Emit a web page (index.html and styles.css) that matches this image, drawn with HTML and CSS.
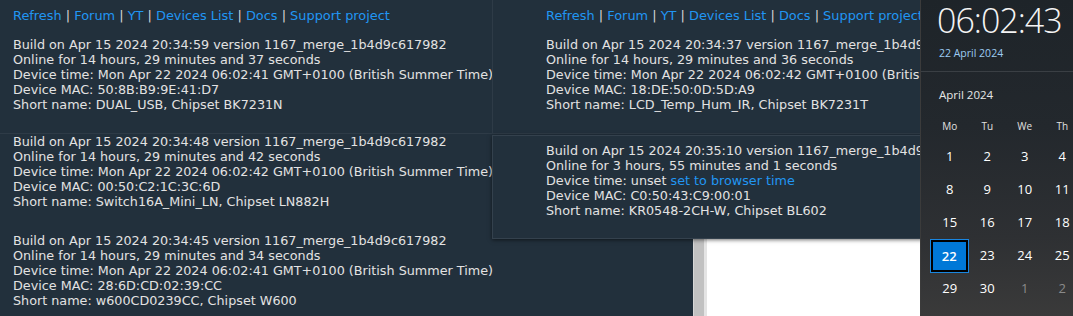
FILE: index.html
```html
<!DOCTYPE html>
<html>
<head>
<meta charset="utf-8">
<title>OpenBeken devices</title>
<link rel="stylesheet" href="styles.css">
</head>
<body>
<div class="desk">

  <section class="win win-c">
    <div class="info">
      <div>Build on Apr 15 2024 20:34:45 version 1167_merge_1b4d9c617982</div>
      <div>Online for 14 hours, 29 minutes and 34 seconds</div>
      <div>Device time: Mon Apr 22 2024 06:02:41 GMT+0100 (British Summer Time)</div>
      <div>Device MAC: 28:6D:CD:02:39:CC</div>
      <div>Short name: w600CD0239CC, Chipset W600</div>
    </div>
  </section>

  <div class="blank">
    <div class="scrollbar"></div>
  </div>

  <section class="win win-b">
    <div class="info">
      <div>Build on Apr 15 2024 20:34:48 version 1167_merge_1b4d9c617982</div>
      <div>Online for 14 hours, 29 minutes and 42 seconds</div>
      <div>Device time: Mon Apr 22 2024 06:02:42 GMT+0100 (British Summer Time)</div>
      <div>Device MAC: 00:50:C2:1C:3C:6D</div>
      <div>Short name: Switch16A_Mini_LN, Chipset LN882H</div>
    </div>
  </section>

  <section class="win win-a">
    <nav class="links"><a href="#">Refresh</a> | <a href="#">Forum</a> | <a href="#">YT</a> | <a href="#">Devices List</a> | <a href="#">Docs</a> | <a href="#">Support project</a></nav>
    <div class="info">
      <div>Build on Apr 15 2024 20:34:59 version 1167_merge_1b4d9c617982</div>
      <div>Online for 14 hours, 29 minutes and 37 seconds</div>
      <div>Device time: Mon Apr 22 2024 06:02:41 GMT+0100 (British Summer Time)</div>
      <div>Device MAC: 50:8B:B9:9E:41:D7</div>
      <div>Short name: DUAL_USB, Chipset BK7231N</div>
    </div>
  </section>

  <section class="win win-d">
    <nav class="links"><a href="#">Refresh</a> | <a href="#">Forum</a> | <a href="#">YT</a> | <a href="#">Devices List</a> | <a href="#">Docs</a> | <a href="#">Support project</a></nav>
    <div class="info">
      <div>Build on Apr 15 2024 20:34:37 version 1167_merge_1b4d9c617982</div>
      <div>Online for 14 hours, 29 minutes and 36 seconds</div>
      <div>Device time: Mon Apr 22 2024 06:02:42 GMT+0100 (British Summer Time)</div>
      <div>Device MAC: 18:DE:50:0D:5D:A9</div>
      <div>Short name: LCD_Temp_Hum_IR, Chipset BK7231T</div>
    </div>
  </section>

  <section class="win win-e">
    <div class="info">
      <div>Build on Apr 15 2024 20:35:10 version 1167_merge_1b4d9c617982</div>
      <div>Online for 3 hours, 55 minutes and 1 seconds</div>
      <div>Device time: unset <a href="#">set to browser time</a></div>
      <div>Device MAC: C0:50:43:C9:00:01</div>
      <div>Short name: KR0548-2CH-W, Chipset BL602</div>
    </div>
  </section>

  <aside class="cal">
    <div class="clock">06:02:43</div>
    <div class="today">22 April 2024</div>
    <div class="cal-body">
      <div class="month">April 2024</div>
      <div class="wk">
        <span>Mo</span><span>Tu</span><span>We</span><span>Th</span><span>Fr</span><span>Sa</span><span>Su</span>
      </div>
      <div class="days">
        <span>1</span><span>2</span><span>3</span><span>4</span><span>5</span><span>6</span><span>7</span>
        <span>8</span><span>9</span><span>10</span><span>11</span><span>12</span><span>13</span><span>14</span>
        <span>15</span><span>16</span><span>17</span><span>18</span><span>19</span><span>20</span><span>21</span>
        <span class="sel">22</span><span>23</span><span>24</span><span>25</span><span>26</span><span>27</span><span>28</span>
        <span>29</span><span>30</span><span class="other">1</span><span class="other">2</span><span class="other">3</span><span class="other">4</span><span class="other">5</span>
        <span class="other">6</span><span class="other">7</span><span class="other">8</span><span class="other">9</span><span class="other">10</span><span class="other">11</span><span class="other">12</span>
      </div>
    </div>
  </aside>

</div>
</body>
</html>
```

FILE: styles.css
```css
html, body {
  margin: 0;
  padding: 0;
  background: #22303c;
}

.desk {
  position: relative;
  width: 1073px;
  height: 316px;
  overflow: hidden;
  font-family: "DejaVu Sans", Verdana, sans-serif;
  font-size: 12.75px;
  line-height: 15px;
  color: #e2e2e2;
}

.win {
  position: absolute;
  box-sizing: border-box;
  background: #22303c;
  overflow: hidden;
  white-space: nowrap;
}

.links {
  color: #d8d8d8;
  margin-bottom: 14px;
  font-size: 12.9px;
}

a {
  color: #2196f3;
  text-decoration: none;
}

/* bottom-left window */
.win-c {
  left: 0;
  top: 230px;
  width: 693px;
  height: 86px;
  padding: 2px 0 0 13px;
  border-top: 1px solid #2f3c48;
}

/* white page with scrollbar */
.blank {
  position: absolute;
  left: 693px;
  top: 230px;
  width: 227px;
  height: 86px;
  background: #ffffff;
  display: flex;
}

.scrollbar {
  width: 10px;
  border-left: 1px solid #d6d6d6;
  border-right: 3px solid #e4e4e4;
  background: #c1c1c1;
}

/* middle-left window */
.win-b {
  left: 0;
  top: 134px;
  width: 700px;
  height: 97px;
  padding: 0 0 0 13px;
}

/* top-left window */
.win-a {
  left: 0;
  top: 0;
  width: 493px;
  height: 134px;
  padding: 8px 0 0 13px;
  border-right: 1px solid #2e3b47;
  border-bottom: 1px solid #2e3b47;
}

/* top-right window */
.win-d {
  left: 492px;
  top: 0;
  width: 428px;
  height: 134px;
  padding: 8px 0 0 53px;
  border-left: 1px solid #2e3b47;
  border-bottom: 1px solid #2e3b47;
}

/* middle-right window */
.win-e {
  left: 492px;
  top: 135px;
  width: 440px;
  height: 104px;
  padding: 7px 0 0 53px;
  border: 1px solid #34414d;
  box-shadow: 0 1px 4px rgba(0, 0, 0, 0.55);
}

/* calendar flyout */
.cal {
  position: absolute;
  left: 920px;
  top: 0;
  width: 153px;
  height: 316px;
  box-sizing: border-box;
  border-left: 1px solid #3b3b3b;
  background: linear-gradient(#1e2429 0%, #23282d 40%, #2e3033 75%, #3a3a3a 100%);
  font-family: "Open Sans", "Noto Sans", sans-serif;
  color: #ffffff;
  overflow: hidden;
}

.clock {
  padding: 0 0 0 16px;
  margin-top: -1px;
  font-size: 34px;
  font-weight: 300;
  letter-spacing: -1px;
  line-height: 42px;
  color: #f4f4f4;
}

.today {
  padding-left: 18px;
  font-size: 10.5px;
  line-height: 14px;
  margin-top: 5px;
  color: #9ccbf2;
}

.cal-body {
  margin-top: 11px;
  border-top: 1px solid #3a3f44;
  padding-top: 15px;
}

.month {
  padding-left: 18px;
  font-size: 11.5px;
  line-height: 16px;
  color: #e6e6e6;
}

.wk, .days {
  display: grid;
  grid-template-columns: repeat(7, 37.5px);
  padding-left: 10px;
}

.wk {
  margin-top: 16px;
  line-height: 14px;
  font-size: 10px;
  color: #e0e0e0;
}

.wk span, .days span {
  text-align: center;
}

.days {
  margin-top: 7px;
  grid-auto-rows: 33px;
  font-size: 13px;
}

.days span {
  line-height: 33px;
  box-sizing: border-box;
}

.days .other {
  color: #8a8a8a;
}

.days .sel {
  margin: 1px 1px 0 0;
  line-height: 28px;
  height: 32px;
  background: #0078d7;
  border: 2px solid #000;
  outline: 1px solid #1a86e0;
  font-weight: 600;
}
```
